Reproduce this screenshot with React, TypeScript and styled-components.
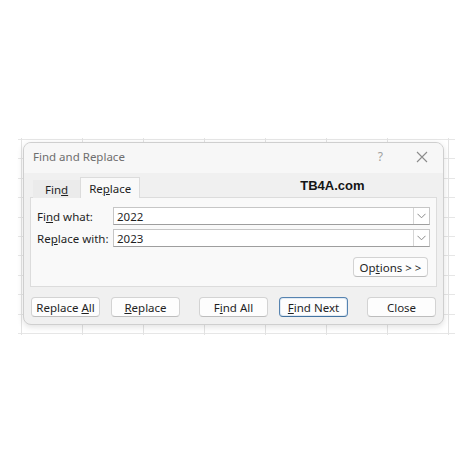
import React from 'react';
import styled, { createGlobalStyle } from 'styled-components';

const GlobalStyle = createGlobalStyle`
  html, body {
    margin: 0;
    padding: 0;
    background: #ffffff;
  }
  body {
    width: 474px;
    height: 474px;
    font-family: "Noto Sans", "Open Sans", sans-serif;
    color: #1f1f1f;
  }
`;

interface IFieldProps {
  label: React.ReactNode,
  value: string,
}

const Field: React.FC<IFieldProps> = ({ label, value }) => {
  return (
    <FieldRow>
      <FieldLabel>{label}</FieldLabel>
      <ComboBox>
        <ComboValue>{value}</ComboValue>
        <ComboArrow>
          <svg width="9" height="6" viewBox="0 0 9 6">
            <path d="M0.5 0.8 L4.5 4.8 L8.5 0.8" fill="none" stroke="#8a8a8a" strokeWidth="1" />
          </svg>
        </ComboArrow>
      </ComboBox>
    </FieldRow>
  );
}

const App: React.FC = () => {
  return (
    <>
      <GlobalStyle />
      <Page>
        <Sheet>
          <Dialog>
            <TitleBar>
              <Title>Find and Replace</Title>
              <TitleActions>
                <HelpMark>?</HelpMark>
                <svg width="12" height="12" viewBox="0 0 12 12">
                  <path d="M1 1 L11 11 M11 1 L1 11" stroke="#8c8c8c" strokeWidth="1.1" />
                </svg>
              </TitleActions>
            </TitleBar>

            <TabRow>
              <Tab><span>Fin<u>d</u></span></Tab>
              <Tab $active><span>Re<u>p</u>lace</span></Tab>
              <Brand>TB4A.com</Brand>
            </TabRow>

            <Panel>
              <Field label={<>Fi<u>n</u>d what:</>} value="2022" />
              <Field label={<>Re<u>p</u>lace with:</>} value="2023" />
              <OptionsRow>
                <Button $w={75}><span>Op<u>t</u>ions &gt; &gt;</span></Button>
              </OptionsRow>
            </Panel>

            <ButtonBar>
              <Button><span>Replace <u>A</u>ll</span></Button>
              <Button><span><u>R</u>eplace</span></Button>
              <Spacer />
              <Button><span>F<u>i</u>nd All</span></Button>
              <Button $primary><span><u>F</u>ind Next</span></Button>
              <Spacer />
              <Button><span>Close</span></Button>
            </ButtonBar>
          </Dialog>
        </Sheet>
      </Page>
    </>
  );
}

const Page = styled.div`
  width: 474px;
  height: 474px;
  padding: 138px 0 0 18px;
  box-sizing: border-box;
`;

const Sheet = styled.div`
  width: 437px;
  height: 197px;
  box-sizing: border-box;
  padding: 4px 0 0 5px;
  background-color: #ffffff;
  background-image:
    repeating-linear-gradient(to right, transparent 0px, transparent 3px, #e3e3e3 3px, #e3e3e3 4px, transparent 4px, transparent 61px),
    repeating-linear-gradient(to bottom, transparent 0px, transparent 1px, #e6e6e6 1px, #e6e6e6 2px, transparent 2px, transparent 19.4px);
`;

const Dialog = styled.div`
  width: 421px;
  height: 183px;
  box-sizing: border-box;
  background: #f0f0f0;
  border: 1px solid #cfcfcf;
  border-radius: 8px;
  box-shadow: 0 2px 6px rgba(0, 0, 0, 0.12);
  display: flex;
  flex-direction: column;
  overflow: hidden;
`;

const TitleBar = styled.div`
  height: 30px;
  flex: none;
  box-sizing: border-box;
  display: flex;
  align-items: center;
  justify-content: space-between;
  padding: 0 15px 3px 9px;
  background: #f7f7f7;
`;

const Title = styled.span`
  font-size: 11.5px;
  color: #6e6e6e;
`;

const TitleActions = styled.div`
  display: flex;
  align-items: center;
  gap: 33px;
`;

const HelpMark = styled.span`
  font-size: 12px;
  color: #a0a0a0;
`;

const TabRow = styled.div`
  height: 23px;
  flex: none;
  display: flex;
  align-items: flex-end;
  padding: 0 0 0 9px;
  margin-top: 1px;
`;

const Tab = styled.div<{ $active?: boolean }>`
  height: ${p => (p.$active ? 20 : 17)}px;
  display: flex;
  align-items: center;
  justify-content: center;
  padding: 0 ${p => (p.$active ? 8 : 11)}px;
  font-size: 11.5px;
  background: ${p => (p.$active ? '#f9f9f9' : '#ebebeb')};
  border: 1px solid ${p => (p.$active ? '#dcdcdc' : 'transparent')};
  border-bottom: none;
  position: relative;
  top: 1px;
`;

const Brand = styled.span`
  margin-left: 160px;
  align-self: center;
  font-family: "Liberation Sans", Arial, sans-serif;
  font-weight: bold;
  font-size: 13px;
  color: #151515;
`;

const Panel = styled.div`
  margin: 0 6px 0 6px;
  height: 90px;
  box-sizing: border-box;
  background: #f9f9f9;
  border: 1px solid #dcdcdc;
  padding: 9px 6px 0 6px;
  display: flex;
  flex-direction: column;
  gap: 4px;
`;

const FieldRow = styled.div`
  display: flex;
  align-items: center;
`;

const FieldLabel = styled.span`
  width: 76px;
  flex: none;
  font-size: 11.5px;
`;

const ComboBox = styled.div`
  flex: 1;
  height: 18px;
  box-sizing: border-box;
  display: flex;
  align-items: stretch;
  background: #ffffff;
  border: 1px solid #c6c6c6;
  border-bottom-color: #9e9e9e;
`;

const ComboValue = styled.span`
  flex: 1;
  display: flex;
  align-items: center;
  padding-left: 3px;
  font-size: 11.5px;
`;

const ComboArrow = styled.span`
  width: 15px;
  display: flex;
  align-items: center;
  justify-content: center;
  border-left: 1px solid #d6d6d6;
`;

const OptionsRow = styled.div`
  display: flex;
  justify-content: flex-end;
  padding: 6px 2px 0 0;
`;

const Button = styled.div<{ $primary?: boolean, $w?: number }>`
  width: ${p => p.$w ?? 69}px;
  height: 20px;
  box-sizing: border-box;
  display: flex;
  align-items: center;
  justify-content: center;
  font-size: 11.5px;
  background: #fdfdfd;
  border: 1px solid ${p => (p.$primary ? '#5683b0' : '#d3d3d3')};
  border-bottom-color: ${p => (p.$primary ? '#44739f' : '#bdbdbd')};
  border-radius: 4px;
  box-shadow: ${p => (p.$primary ? 'inset 0 0 0 1px #e2ebf4' : 'none')};
`;

const ButtonBar = styled.div`
  display: flex;
  align-items: center;
  gap: 11px;
  padding: 10px 6px 0 7px;
`;

const Spacer = styled.div`
  width: 8px;
  margin: 0 -11px 0 0;
`;

export default App;
